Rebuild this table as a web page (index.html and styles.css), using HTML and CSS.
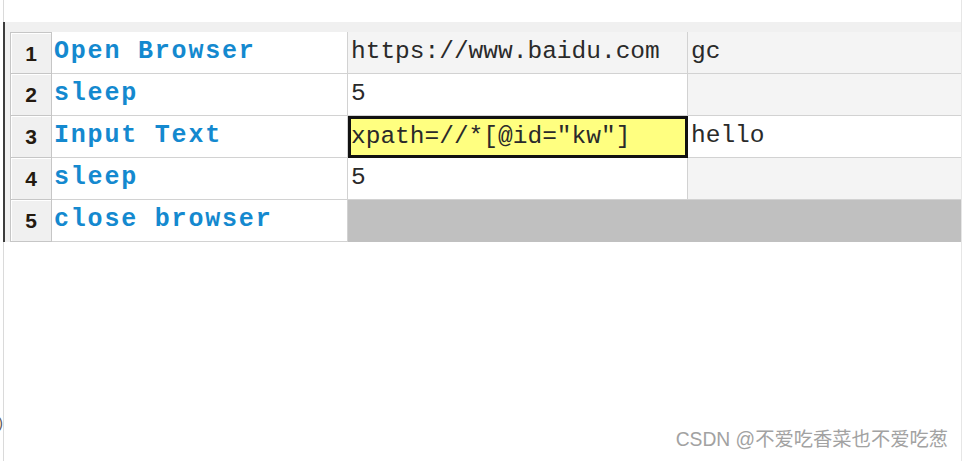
FILE: index.html
```html
<!DOCTYPE html>
<html>
<head>
<meta charset="utf-8">
<link rel="stylesheet" href="styles.css">
</head>
<body>
<div class="edge"><span class="paren">)</span></div>
<div class="page">
  <div class="top"></div>
  <div class="sheet">
    <div class="grid">
      <div class="num">1</div>
      <div class="cell kw">Open Browser</div>
      <div class="cell arg light">https://www.baidu.com</div>
      <div class="cell arg light">gc</div>

      <div class="num">2</div>
      <div class="cell kw">sleep</div>
      <div class="cell arg">5</div>
      <div class="cell arg light"></div>

      <div class="num">3</div>
      <div class="cell kw">Input Text</div>
      <div class="cell arg sel">xpath=//*[@id="kw"]</div>
      <div class="cell arg">hello</div>

      <div class="num">4</div>
      <div class="cell kw">sleep</div>
      <div class="cell arg">5</div>
      <div class="cell arg light"></div>

      <div class="num">5</div>
      <div class="cell kw">close browser</div>
      <div class="cell empty"></div>
      <div class="cell empty"></div>
    </div>
  </div>
  <div class="footer">
    <span class="mark">CSDN @不爱吃香菜也不爱吃葱</span>
  </div>
</div>
</body>
</html>
```

FILE: styles.css
```css
html, body {
  margin: 0;
  padding: 0;
  background: #ffffff;
}
body {
  width: 963px;
  height: 461px;
  overflow: hidden;
  display: flex;
}
.edge {
  width: 3px;
  flex: none;
  overflow: hidden;
  display: flex;
  justify-content: flex-end;
  align-items: flex-end;
  padding-bottom: 30px;
  box-sizing: border-box;
}
.paren {
  font-family: "Liberation Sans", sans-serif;
  font-size: 14px;
  line-height: 16px;
  color: #555;
}
.page {
  width: 959px;
  height: 461px;
  display: flex;
  flex-direction: column;
  border-left: 1px solid #dadada;
  border-right: 1px solid #e6e6e6;
  box-sizing: border-box;
}
.top {
  height: 22px;
  flex: none;
}
.sheet {
  margin-left: -1px;
  border-left: 2px solid #3c3c3c;
  background: #f0f0f0;
  padding: 10px 0 0 5px;
  height: 220px;
  box-sizing: border-box;
  overflow: hidden;
}
.grid {
  display: grid;
  grid-template-columns: 42px 296px 340px 274px;
  grid-auto-rows: 42px;
}
.num {
  background: #f0f0f0;
  border: 1px solid #c6c6c6;
  border-top: none;
  box-shadow: inset 1px 1px 0 #ffffff;
  display: flex;
  align-items: center;
  justify-content: center;
  font-family: "Liberation Sans", sans-serif;
  font-weight: bold;
  font-size: 21px;
  color: #241a10;
  padding-top: 1px;
  box-sizing: border-box;
}
.grid > .num:first-child {
  border-top: 1px solid #c6c6c6;
}
.cell {
  background: #ffffff;
  border-right: 1px solid #d2d2d2;
  border-bottom: 1px solid #d2d2d2;
  display: flex;
  align-items: center;
  white-space: nowrap;
  overflow: hidden;
  box-sizing: border-box;
}
.kw {
  font-family: "Liberation Mono", monospace;
  font-weight: bold;
  font-size: 25px;
  letter-spacing: 1.8px;
  color: #1489cf;
  padding-left: 2px;
  padding-bottom: 2px;
}
.arg {
  font-family: "Liberation Mono", monospace;
  font-size: 24.5px;
  color: #2a2a2a;
  padding-left: 3px;
  padding-bottom: 2px;
}
.light {
  background: #f4f4f4;
}
.sel {
  background: #ffff80;
  border: 3px solid #111111;
  padding-left: 0;
}
.empty {
  background: #c0c0c0;
  border: none;
}
.footer {
  margin-top: auto;
  display: flex;
  justify-content: flex-end;
  padding: 0 13px 9px 0;
}
.mark {
  font-family: "Liberation Sans", "Noto Sans CJK SC", sans-serif;
  font-size: 19.3px;
  color: #a2a2a2;
}
```
